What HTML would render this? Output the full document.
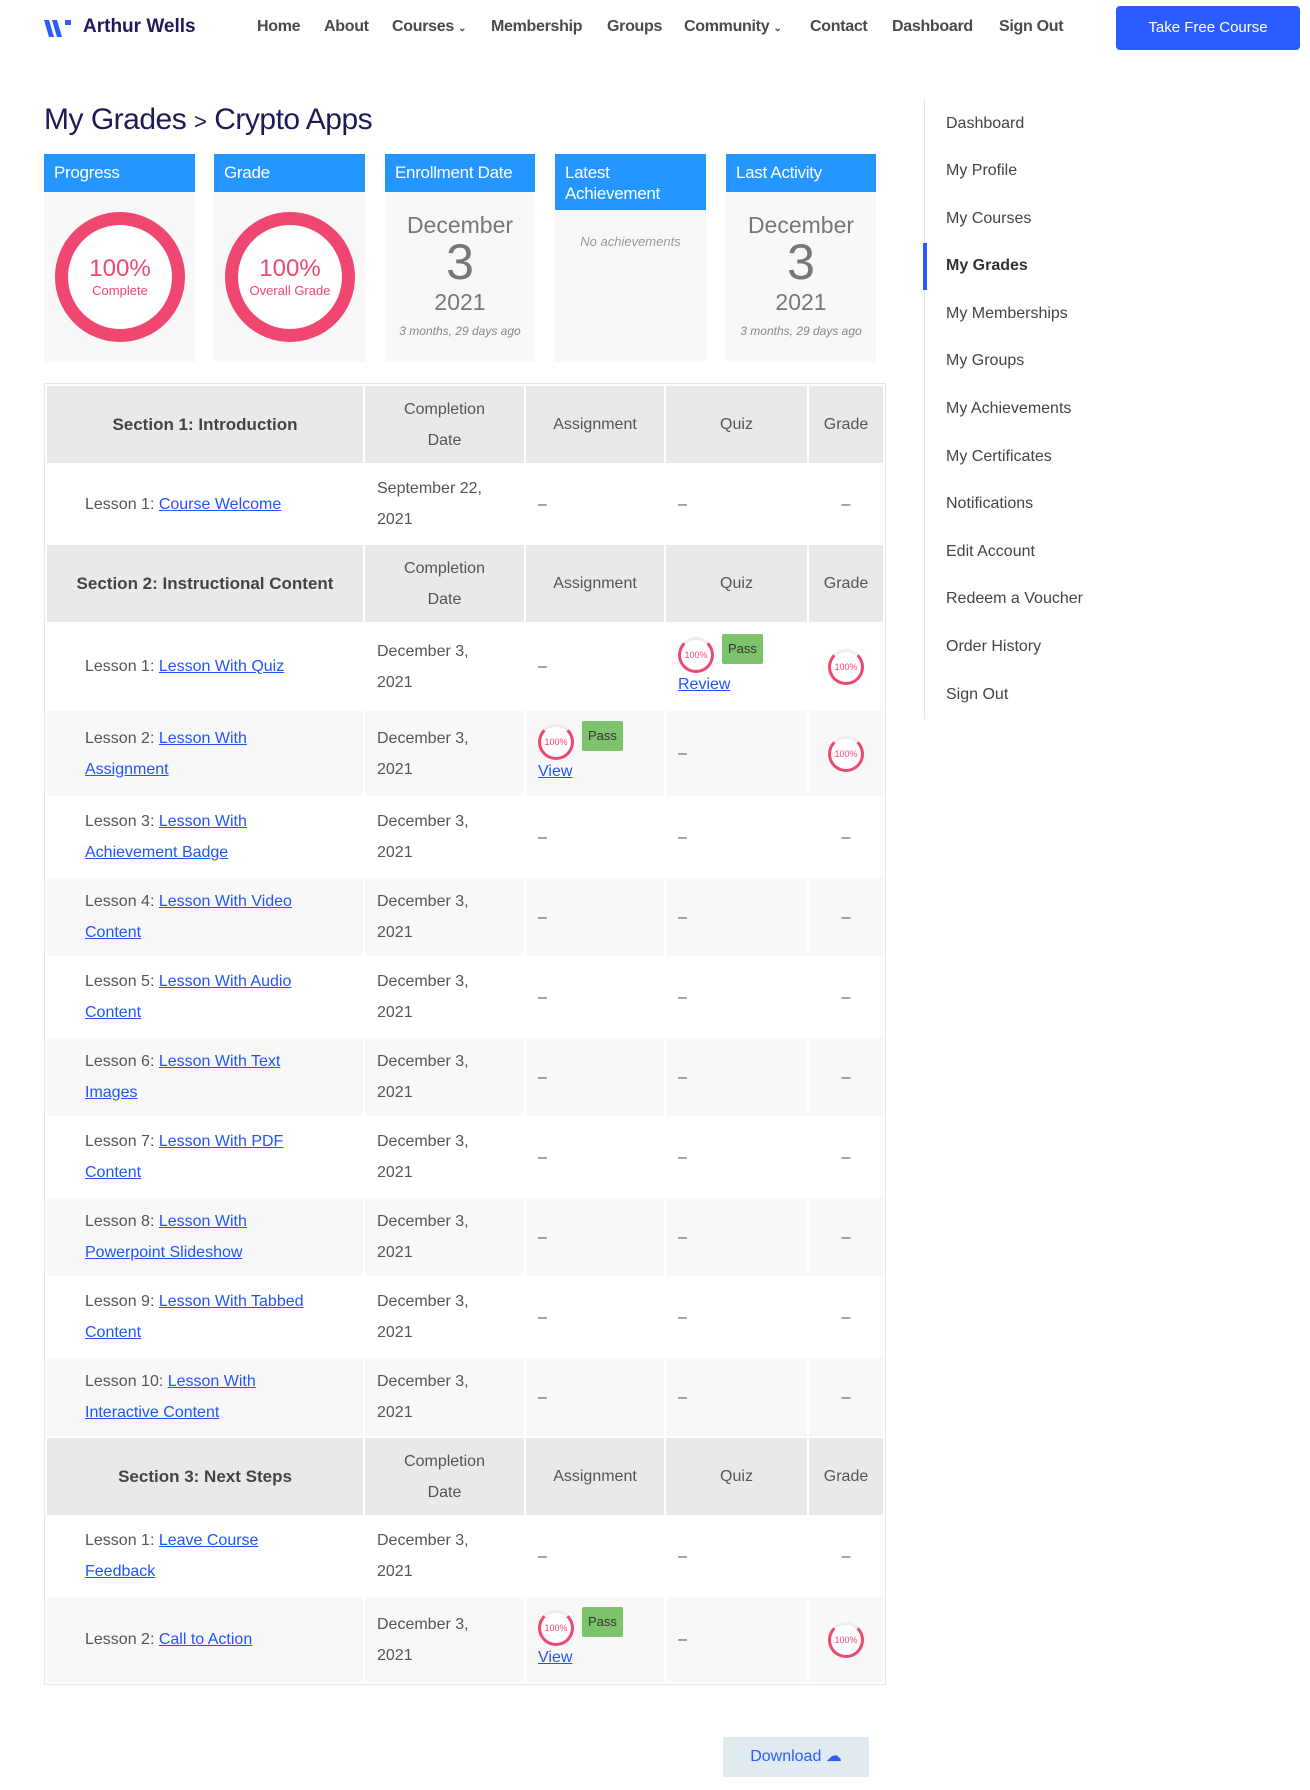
<!DOCTYPE html>
<html><head><meta charset="utf-8">
<style>
*{box-sizing:border-box;margin:0;padding:0}
body{width:1310px;height:1790px;background:#fff;font-family:"Liberation Sans",sans-serif;color:#555;position:relative;overflow:hidden}
.a{position:absolute}
.nav{top:18px;font-size:16px;font-weight:bold;color:#4a4a4a;letter-spacing:-0.3px}
.btn{left:1116px;top:6px;width:184px;height:44px;background:#2b5cff;border-radius:4px;color:#fff;font-size:15px;text-align:center;line-height:44px}
h1{position:absolute;left:44px;top:103px;font-size:30px;font-weight:normal;color:#1d1a55;letter-spacing:-0.5px}
.card{position:absolute;top:154px;height:208px;background:#f8f8f8;text-align:center}
.ch{background:#2396ff;color:#fff;font-size:17px;text-align:left;padding:8px 10px;height:38px;line-height:21px;letter-spacing:-0.3px}
.ring{position:absolute;left:11px;top:58px;width:130px;height:130px;border:13px solid #ef476f;border-radius:50%;background:#fff;color:#ef476f}
.big{font-size:24px;margin-top:30px}
.sm{font-size:13px}
.dt{color:#777}
.side{position:absolute;left:946px;font-size:16px;color:#444}
table{position:absolute;left:44px;top:383px;width:842px;border-collapse:separate;border-spacing:2px;border:1px solid #e6e6e6;font-size:16px}
td{padding:0 12px;vertical-align:middle;line-height:31px}
tr.h td{background:#e9e9e9;text-align:center;height:77px;color:#555}
tr.h td:first-child{font-weight:bold;font-size:17px;color:#444}
tr.r td{background:#fff;height:78px}
tr.g td{background:#f8f8f8;height:78px}
tr.q td{height:85px}
tr.q td.x{line-height:24px}
td.l{padding-left:38px;color:#555}
a{color:#1f55ff;text-decoration:underline}
.mini{display:inline-block;width:36px;height:36px;border-radius:50%;border:3px solid #ef476f;border-top-color:#eee;font-size:9px;color:#ef476f;text-align:center;line-height:30px;vertical-align:middle;background:#fff}
.pass{display:inline-block;background:#7dc36b;color:#333;font-size:13px;padding:0 6px;height:30px;line-height:30px;border-radius:2px;vertical-align:middle;margin-left:8px;position:relative;top:-6px}
</style></head><body>
<svg class="a" style="left:44px;top:18px" width="28" height="20" viewBox="0 0 28 20"><path d="M0 2h5l5 17H5z M8 2h5l5 17h-5z" fill="#2b5cff"/><rect x="21" y="2" width="6" height="5" fill="#2b5cff"/></svg>
<div class="a" style="left:83px;top:16px;font-size:19px;font-weight:bold;color:#1f1a5a">Arthur Wells</div>
<div class="a nav" style="left:257px">Home</div>
<div class="a nav" style="left:324px">About</div>
<div class="a nav" style="left:392px">Courses <span style="font-size:10px">&#8964;</span></div>
<div class="a nav" style="left:491px">Membership</div>
<div class="a nav" style="left:607px">Groups</div>
<div class="a nav" style="left:684px">Community <span style="font-size:10px">&#8964;</span></div>
<div class="a nav" style="left:810px">Contact</div>
<div class="a nav" style="left:892px">Dashboard</div>
<div class="a nav" style="left:999px">Sign Out</div>
<div class="a btn">Take Free Course</div>

<h1>My Grades <span style="font-size:22px">&gt;</span> Crypto Apps</h1>

<div class="card" style="left:44px;width:151px"><div class="ch">Progress</div><div class="ring"><div class="big">100%</div><div class="sm">Complete</div></div></div>
<div class="card" style="left:214px;width:151px"><div class="ch">Grade</div><div class="ring"><div class="big">100%</div><div class="sm">Overall Grade</div></div></div>
<div class="card dt" style="left:385px;width:150px"><div class="ch">Enrollment Date</div><div style="font-size:23px;margin-top:20px">December</div><div style="font-size:50px;line-height:46px">3</div><div style="font-size:23px;margin-top:4px">2021</div><div style="font-size:12px;font-style:italic;margin-top:8px;color:#888">3 months, 29 days ago</div></div>
<div class="card" style="left:555px;width:151px"><div class="ch" style="height:56px">Latest<br>Achievement</div><div style="font-size:13px;font-style:italic;color:#999;margin-top:24px">No achievements</div></div>
<div class="card dt" style="left:726px;width:150px"><div class="ch">Last Activity</div><div style="font-size:23px;margin-top:20px">December</div><div style="font-size:50px;line-height:46px">3</div><div style="font-size:23px;margin-top:4px">2021</div><div style="font-size:12px;font-style:italic;margin-top:8px;color:#888">3 months, 29 days ago</div></div>

<div class="a" style="left:924px;top:100px;width:1px;height:619px;background:#e5e5e5"></div>
<div class="a" style="left:923px;top:243px;width:4px;height:47px;background:#2b5cff"></div>
<div class="side" style="top:115px">Dashboard</div>
<div class="side" style="top:162px">My Profile</div>
<div class="side" style="top:210px">My Courses</div>
<div class="side" style="top:257px;font-weight:bold;color:#333">My Grades</div>
<div class="side" style="top:305px">My Memberships</div>
<div class="side" style="top:352px">My Groups</div>
<div class="side" style="top:400px">My Achievements</div>
<div class="side" style="top:448px">My Certificates</div>
<div class="side" style="top:495px">Notifications</div>
<div class="side" style="top:543px">Edit Account</div>
<div class="side" style="top:590px">Redeem a Voucher</div>
<div class="side" style="top:638px">Order History</div>
<div class="side" style="top:686px">Sign Out</div>

<table>
<colgroup><col style="width:316px"><col style="width:159px"><col style="width:138px"><col style="width:141px"><col style="width:74px"></colgroup>
<tr class="h"><td>Section 1: Introduction</td><td>Completion<br>Date</td><td>Assignment</td><td>Quiz</td><td>Grade</td></tr>
<tr class="r"><td class="l">Lesson 1: <a>Course Welcome</a></td><td>September 22,<br>2021</td><td>–</td><td>–</td><td style="text-align:center">–</td></tr>
<tr class="h"><td>Section 2: Instructional Content</td><td>Completion<br>Date</td><td>Assignment</td><td>Quiz</td><td>Grade</td></tr>
<tr class="r q"><td class="l">Lesson 1: <a>Lesson With Quiz</a></td><td>December 3,<br>2021</td><td>–</td><td class="x"><span class="mini">100%</span><span class="pass">Pass</span><br><a>Review</a></td><td style="text-align:center"><span class="mini">100%</span></td></tr>
<tr class="g q"><td class="l">Lesson 2: <a>Lesson With<br>Assignment</a></td><td>December 3,<br>2021</td><td class="x"><span class="mini">100%</span><span class="pass">Pass</span><br><a>View</a></td><td>–</td><td style="text-align:center"><span class="mini">100%</span></td></tr>
<tr class="r"><td class="l">Lesson 3: <a>Lesson With<br>Achievement Badge</a></td><td>December 3,<br>2021</td><td>–</td><td>–</td><td style="text-align:center">–</td></tr>
<tr class="g"><td class="l">Lesson 4: <a>Lesson With Video<br>Content</a></td><td>December 3,<br>2021</td><td>–</td><td>–</td><td style="text-align:center">–</td></tr>
<tr class="r"><td class="l">Lesson 5: <a>Lesson With Audio<br>Content</a></td><td>December 3,<br>2021</td><td>–</td><td>–</td><td style="text-align:center">–</td></tr>
<tr class="g"><td class="l">Lesson 6: <a>Lesson With Text<br>Images</a></td><td>December 3,<br>2021</td><td>–</td><td>–</td><td style="text-align:center">–</td></tr>
<tr class="r"><td class="l">Lesson 7: <a>Lesson With PDF<br>Content</a></td><td>December 3,<br>2021</td><td>–</td><td>–</td><td style="text-align:center">–</td></tr>
<tr class="g"><td class="l">Lesson 8: <a>Lesson With<br>Powerpoint Slideshow</a></td><td>December 3,<br>2021</td><td>–</td><td>–</td><td style="text-align:center">–</td></tr>
<tr class="r"><td class="l">Lesson 9: <a>Lesson With Tabbed<br>Content</a></td><td>December 3,<br>2021</td><td>–</td><td>–</td><td style="text-align:center">–</td></tr>
<tr class="g"><td class="l">Lesson 10: <a>Lesson With<br>Interactive Content</a></td><td>December 3,<br>2021</td><td>–</td><td>–</td><td style="text-align:center">–</td></tr>
<tr class="h"><td>Section 3: Next Steps</td><td>Completion<br>Date</td><td>Assignment</td><td>Quiz</td><td>Grade</td></tr>
<tr class="r"><td class="l">Lesson 1: <a>Leave Course<br>Feedback</a></td><td>December 3,<br>2021</td><td>–</td><td>–</td><td style="text-align:center">–</td></tr>
<tr class="g q"><td class="l">Lesson 2: <a>Call to Action</a></td><td>December 3,<br>2021</td><td class="x"><span class="mini">100%</span><span class="pass">Pass</span><br><a>View</a></td><td>–</td><td style="text-align:center"><span class="mini">100%</span></td></tr>
</table>

<div class="a" style="left:723px;top:1737px;width:146px;height:40px;background:#e1eaee;color:#2b5cff;font-size:16px;text-align:center;line-height:40px">Download &#9729;</div>
</body></html>
